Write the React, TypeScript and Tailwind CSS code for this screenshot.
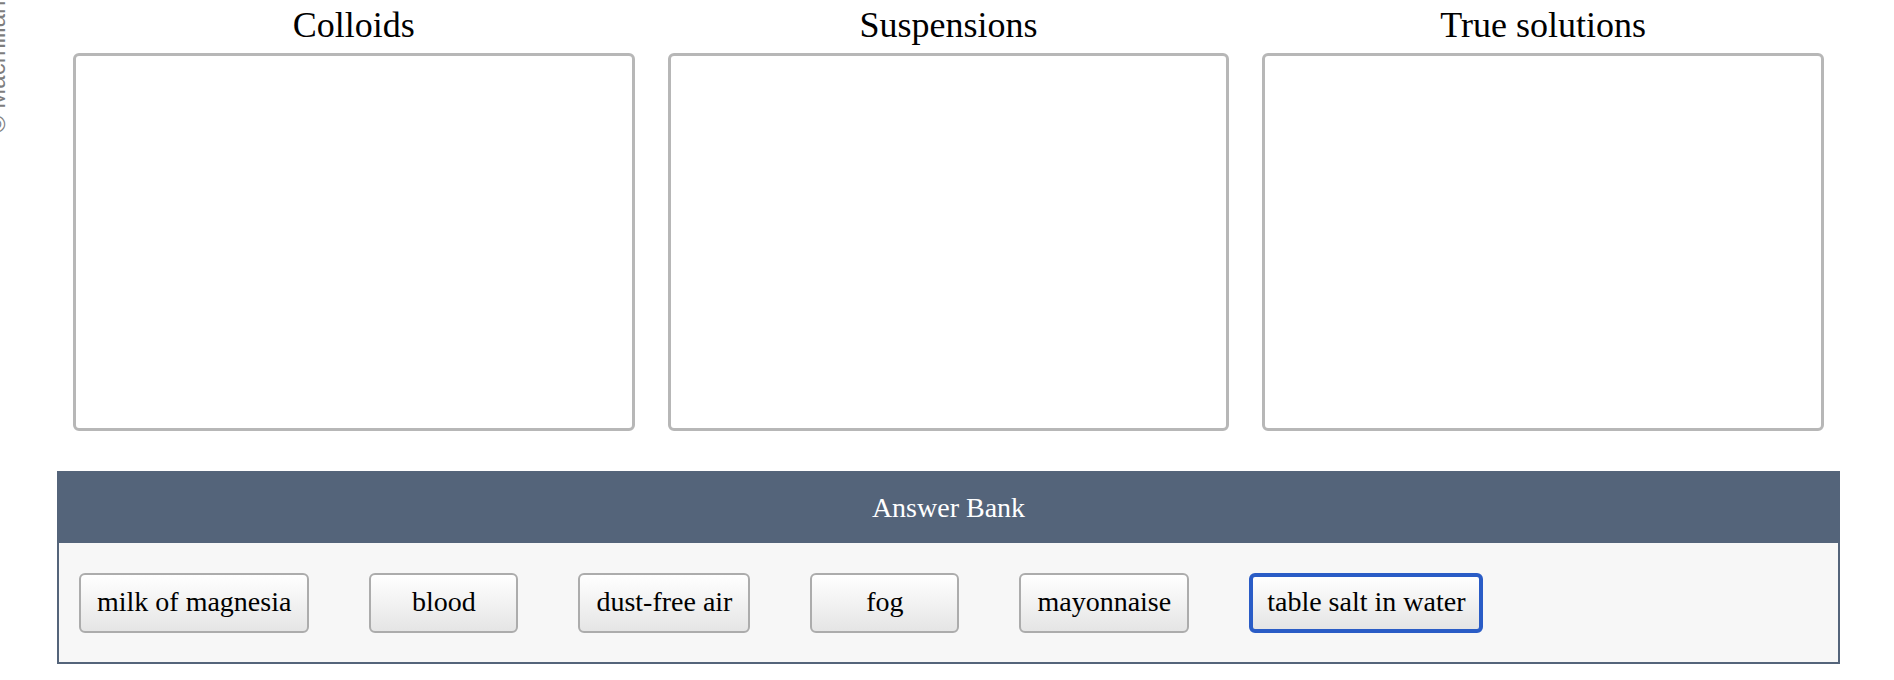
const categories = ['Colloids', 'Suspensions', 'True solutions'];

const answers = [
  { label: 'milk of magnesia', focused: false },
  { label: 'blood', focused: false },
  { label: 'dust-free air', focused: false },
  { label: 'fog', focused: false },
  { label: 'mayonnaise', focused: false },
  { label: 'table salt in water', focused: true },
];

function DropZone({ title }: { title: string }) {
  return (
    <div className="flex flex-col">
      <h2 className="h-[53px] pt-[5px] text-center text-[36px] leading-[41px] text-black">{title}</h2>
      <div className="h-[378px] rounded-[6px] border-[3px] border-[#b7b7b7] bg-white" />
    </div>
  );
}

function AnswerChip({ label, focused }: { label: string; focused: boolean }) {
  return (
    <button
      type="button"
      className={`h-[60px] min-w-[149px] rounded-[6px] bg-gradient-to-b from-white to-[#e5e5e5] pb-[2px] text-[28px] leading-none text-black ${
        focused ? 'border-[4px] border-[#2a5cc6] px-[14px]' : 'border-2 border-[#acacac] px-[16px]'
      }`}
    >
      {label}
    </button>
  );
}

export default function App() {
  return (
    <div className="relative h-[680px] w-[1894px] overflow-hidden bg-white font-['Liberation_Serif','Times_New_Roman',serif]">
      {/* Copyright watermark, rotated and mostly clipped at the left edge */}
      <span className="absolute left-[-15px] top-[133px] origin-top-left -rotate-90 whitespace-nowrap font-['Liberation_Sans',Arial,sans-serif] text-[24px] leading-[24px] text-[#7d7d7d]">
        © Macmillan Learning
      </span>

      <div className="ml-[57px] w-[1783px]">
        <div className="grid grid-cols-3 gap-[33px] px-[16px]">
          {categories.map((c) => (
            <DropZone key={c} title={c} />
          ))}
        </div>

        <div className="mt-[40px] border-2 border-[#54647a] bg-[#f7f7f7]">
          <div className="flex h-[70px] items-center justify-center bg-[#54647a] text-[28px] text-white">
            Answer Bank
          </div>
          <div className="flex items-center gap-[60px] px-[20px] pb-[29px] pt-[30px]">
            {answers.map((a) => (
              <AnswerChip key={a.label} label={a.label} focused={a.focused} />
            ))}
          </div>
        </div>
      </div>
    </div>
  );
}
